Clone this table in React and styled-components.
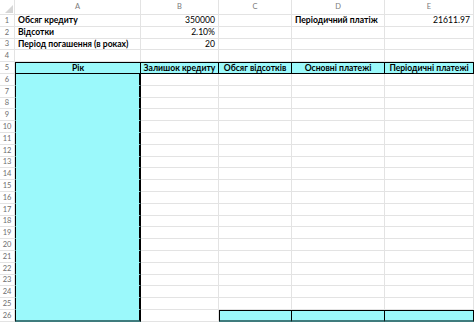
import React from "react";
import styled, { createGlobalStyle, css } from "styled-components";

const Global = createGlobalStyle`
  html, body { margin: 0; padding: 0; background: #fff; }
  body { width: 474px; height: 323px; overflow: hidden; }
`;

const GRID = "#e3e3e3";
const CYAN = "#9bf9fb";
const INK = "#000";

const Sheet = styled.div`
  display: grid;
  grid-template-columns: 15px 126px 78px 73px 93px 89px;
  grid-template-rows: 15px;
  grid-auto-rows: 11.8px;
  font-family: Lato, "Open Sans", "Noto Sans", sans-serif;
  color: #000;
  width: 474px;
`;

const Corner = styled.div`
  border-right: 1px solid ${GRID};
  border-bottom: 1px solid ${GRID};
  box-sizing: border-box;
  background: #fff;
  display: flex;
  align-items: flex-end;
  justify-content: flex-end;
  padding: 0 1px 1px 0;
`;

const ColHead = styled.div`
  box-sizing: border-box;
  border-right: 1px solid ${GRID};
  border-bottom: 1px solid ${GRID};
  display: flex;
  align-items: center;
  justify-content: center;
  font-size: 7.5px;
  color: #7a7a7a;
  padding-bottom: 1px;
`;

const RowHead = styled.div`
  box-sizing: border-box;
  border-right: 1px solid ${GRID};
  border-bottom: 1px solid ${GRID};
  display: flex;
  align-items: center;
  justify-content: center;
  font-size: 7.5px;
  color: #6e6e6e;
`;

const Cell = styled.div`
  box-sizing: border-box;
  display: flex;
  align-items: center;
  justify-content: ${(p) =>
    p.$align === "right" ? "flex-end" : p.$align === "center" ? "center" : "flex-start"};
  padding: 0 3px;
  font-size: 8.6px;
  font-weight: ${(p) => (p.$bold ? 700 : 400)};
  white-space: nowrap;
  overflow: visible;
  background: ${(p) => (p.$fill ? CYAN : "transparent")};
  border-right: 1px solid ${(p) => (p.$fill ? CYAN : GRID)};
  border-bottom: 1px solid ${(p) => (p.$fill ? CYAN : GRID)};
  ${(p) => p.$bt && css`border-top: ${p.$bt};`}
  ${(p) => p.$bb && css`border-bottom: ${p.$bb};`}
  ${(p) => p.$bl && css`border-left: ${p.$bl};`}
  ${(p) => p.$br && css`border-right: ${p.$br};`}
`;

const THICK = `1.5px solid ${INK}`;
const THIN = `1px solid ${INK}`;
const BOTTOM = `2px solid #3f7c7e`;

const cols = ["A", "B", "C", "D", "E"];

const headers = [
  "Рік",
  "Залишок кредиту",
  "Обсяг відсотків",
  "Основні платежі",
  "Періодичні платежі",
];

function cellFor(r, c) {
  if (r === 1) {
    if (c === 0) return { text: "Обсяг кредиту", $bold: true };
    if (c === 1) return { text: "350000", $align: "right" };
    if (c === 3) return { text: "Періодичний платіж", $bold: true };
    if (c === 4) return { text: "21611.97", $align: "right" };
    return {};
  }
  if (r === 2) {
    if (c === 0) return { text: "Відсотки", $bold: true };
    if (c === 1) return { text: "2.10%", $align: "right" };
    return {};
  }
  if (r === 3) {
    if (c === 0) return { text: "Період погашення (в роках)", $bold: true };
    if (c === 1) return { text: "20", $align: "right" };
    return {};
  }
  if (r === 5) {
    return {
      text: headers[c],
      $bold: true,
      $align: "center",
      $fill: true,
      $bt: THICK,
      $bb: THICK,
      $bl: c === 0 ? THICK : undefined,
      $br: c === 4 ? THICK : THIN,
    };
  }
  if (r >= 6 && r <= 26 && c === 0) {
    return {
      $fill: true,
      $bl: THICK,
      $br: `2px solid ${INK}`,
      $bb: r === 26 ? BOTTOM : undefined,
    };
  }
  if (r === 26 && c >= 2) {
    return {
      $fill: true,
      $bt: THIN,
      $bl: c === 2 ? `1.5px solid ${INK}` : undefined,
      $br: THIN,
      $bb: BOTTOM,
    };
  }
  return {};
}

const CornerMark = () => (
  <svg width="8" height="8" viewBox="0 0 8 8">
    <polygon points="8,0 8,8 0,8" fill="#d6d6d6" />
  </svg>
);

export default function App() {
  const rows = [];
  for (let r = 1; r <= 26; r++) {
    rows.push(<RowHead key={`rh${r}`}>{r}</RowHead>);
    for (let c = 0; c < 5; c++) {
      const { text, ...props } = cellFor(r, c);
      rows.push(
        <Cell key={`c${r}-${c}`} {...props}>
          {text}
        </Cell>
      );
    }
  }
  return (
    <>
      <Global />
      <Sheet>
        <Corner>
          <CornerMark />
        </Corner>
        {cols.map((c) => (
          <ColHead key={c}>{c}</ColHead>
        ))}
        {rows}
      </Sheet>
    </>
  );
}
